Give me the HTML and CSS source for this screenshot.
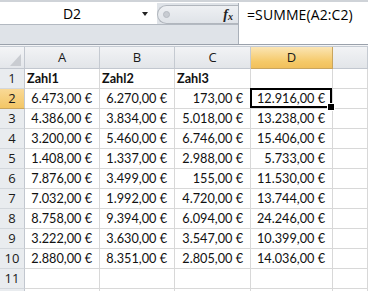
FILE: index.html
```html
<!DOCTYPE html>
<html lang="de">
<head>
<meta charset="utf-8">
<title>Excel SUMME</title>
<link rel="stylesheet" href="styles.css">
</head>
<body>
<div class="app">
  <div class="topline"></div>
  <div class="fbar">
    <div class="fbar-left">
      <div class="fbar-row">
        <div class="namebox"><span class="nb-text">D2</span><span class="nb-arrow"></span></div>
        <div class="capsule"><span class="cap-dot"></span><span class="fx">f<sub>x</sub></span></div>
      </div>
    </div>
    <div class="fbar-input">=SUMME(A2:C2)</div>
  </div>
  <div class="fbar-bottom"></div>
  <div class="sheet">
    <div class="corner"><span class="tri"></span></div>
    <div class="ch">A</div><div class="ch">B</div><div class="ch">C</div><div class="ch sel">D</div><div class="ch"></div>

    <div class="rh">1</div><div class="c hd">Zahl1</div><div class="c hd">Zahl2</div><div class="c hd">Zahl3</div><div class="c"></div><div class="c"></div>
    <div class="rh sel">2</div><div class="c n">6.473,00 €</div><div class="c n">6.270,00 €</div><div class="c n">173,00 €</div><div class="c n active">12.916,00 €</div><div class="c"></div>
    <div class="rh">3</div><div class="c n">4.386,00 €</div><div class="c n">3.834,00 €</div><div class="c n">5.018,00 €</div><div class="c n">13.238,00 €</div><div class="c"></div>
    <div class="rh">4</div><div class="c n">3.200,00 €</div><div class="c n">5.460,00 €</div><div class="c n">6.746,00 €</div><div class="c n">15.406,00 €</div><div class="c"></div>
    <div class="rh">5</div><div class="c n">1.408,00 €</div><div class="c n">1.337,00 €</div><div class="c n">2.988,00 €</div><div class="c n">5.733,00 €</div><div class="c"></div>
    <div class="rh">6</div><div class="c n">7.876,00 €</div><div class="c n">3.499,00 €</div><div class="c n">155,00 €</div><div class="c n">11.530,00 €</div><div class="c"></div>
    <div class="rh">7</div><div class="c n">7.032,00 €</div><div class="c n">1.992,00 €</div><div class="c n">4.720,00 €</div><div class="c n">13.744,00 €</div><div class="c"></div>
    <div class="rh">8</div><div class="c n">8.758,00 €</div><div class="c n">9.394,00 €</div><div class="c n">6.094,00 €</div><div class="c n">24.246,00 €</div><div class="c"></div>
    <div class="rh">9</div><div class="c n">3.222,00 €</div><div class="c n">3.630,00 €</div><div class="c n">3.547,00 €</div><div class="c n">10.399,00 €</div><div class="c"></div>
    <div class="rh">10</div><div class="c n">2.880,00 €</div><div class="c n">8.351,00 €</div><div class="c n">2.805,00 €</div><div class="c n">14.036,00 €</div><div class="c"></div>
    <div class="rh">11</div><div class="c"></div><div class="c"></div><div class="c"></div><div class="c"></div><div class="c"></div>
    <div class="rh"></div><div class="c"></div><div class="c"></div><div class="c"></div><div class="c"></div><div class="c"></div>
  </div>
</div>
</body>
</html>
```

FILE: styles.css
```css
* { box-sizing: border-box; }
html, body { margin: 0; padding: 0; background: #ffffff; }
body { width: 368px; height: 291px; overflow: hidden; font-family: "Lato", "Open Sans", sans-serif; color: #000; }

.app { width: 368px; }

.topline { height: 3px; background: #ffffff; border-top: 2px solid #cfd3d8; }

.fbar { display: flex; height: 41px; }
.fbar-left { width: 239px; background: #dfe3e8; border-right: 1px solid #a9b0b9; }
.fbar-row { display: flex; height: 22px; border-bottom: 1px solid #b3b9c1; }
.namebox { width: 157px; background: #ffffff; display: flex; align-items: center; position: relative; }
.nb-text { flex: 1; text-align: center; font-family: "Open Sans", sans-serif; font-size: 14px; padding-left: 2px; }
.nb-arrow { width: 0; height: 0; border-left: 3px solid transparent; border-right: 3px solid transparent; border-top: 4px solid #222; margin-right: 9px; }
.capsule { flex: 1; display: flex; align-items: center; justify-content: space-between; padding: 0 5px 0 5px; margin-top: 2px; height: 19px; border: 1px solid #b1b6bd; border-right: none; border-radius: 10px 0 0 10px; background: linear-gradient(#eef0f3, #dfe3e8); }
.cap-dot { width: 7px; height: 7px; border-radius: 50%; background: #c8ccd2; border: 1px solid #b6bbc2; }
.fx { font-family: "Liberation Serif", serif; font-style: italic; font-weight: bold; font-size: 14px; color: #222; line-height: 1; }
.fx sub { font-size: 10px; vertical-align: -1px; }
.fbar-input { flex: 1; background: #ffffff; font-family: "Open Sans", sans-serif; font-size: 14px; padding: 3px 0 0 8px; line-height: 18px; letter-spacing: 0.1px; white-space: nowrap; }

.fbar-bottom { height: 3px; border-top: 1px solid #9aa1ab; background: #f3f4f6; border-bottom: 1px solid #c5cbd3; }

.sheet { display: grid; grid-template-columns: 25px 75px 75px 76px 82px 35px; grid-template-rows: 22px; grid-auto-rows: 20px; }

.corner { background: linear-gradient(#f4f5f7, #e3e6ea); border-right: 1px solid #c2c7cf; border-bottom: 1px solid #c2c7cf; position: relative; }
.tri { position: absolute; right: 3px; bottom: 2px; width: 0; height: 0; border-left: 11px solid transparent; border-bottom: 12px solid #c9ccd1; }

.ch { background: linear-gradient(#f2f3f5, #e2e5e9); border-right: 1px solid #c5cad1; border-bottom: 1px solid #c2c7cf; text-align: center; font-family: "Open Sans", sans-serif; font-size: 13px; line-height: 21px; color: #1a1a1a; }
.ch.sel { background: linear-gradient(#fbe5b4, #f5c968 70%, #f1c05c); border-right-color: #c9a55e; border-bottom-color: #c9a55e; }

.rh { background: #e9ecef; border-right: 1px solid #c2c7cf; border-bottom: 1px solid #d3d7dc; text-align: center; font-family: "Open Sans", sans-serif; font-size: 13px; line-height: 19px; color: #1a1a1a; }
.rh.sel { background: linear-gradient(#f9d996, #f3c665); border-bottom-color: #c9a55e; }

.c { border-right: 1px solid #d8d8d8; border-bottom: 1px solid #d8d8d8; font-size: 12.7px; line-height: 19px; white-space: nowrap; position: relative; color: #111; }
.c.n { text-align: right; padding-right: 7px; }
.c.hd { font-weight: bold; padding-left: 2px; }
.c.active::after { content: ""; position: absolute; left: -1px; top: -1px; right: 0; bottom: 0; border: 2px solid #000; }
.c.active::before { content: ""; position: absolute; right: -3px; bottom: -3px; width: 6px; height: 6px; background: #000; border: 1px solid #fff; z-index: 2; }
```
